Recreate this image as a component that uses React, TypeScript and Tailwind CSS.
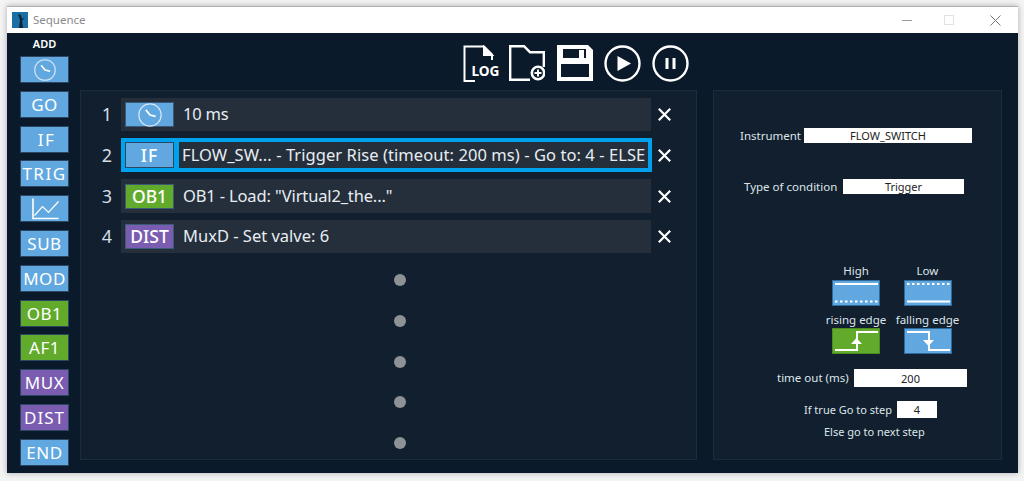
import React from "react";

const FONT = "font-['Noto_Sans','Open_Sans',sans-serif]";

function Clock({ size = 28 }: { size?: number }) {
  return (
    <svg width={size} height={size} viewBox="0 0 28 28" fill="none">
      <circle cx="14" cy="14" r="12" stroke="#d5e6f5" strokeWidth="1.3" />
      <path d="M9.5 8.5 L14 14 L20 15.5" stroke="#ffffff" strokeWidth="1.8" />
    </svg>
  );
}

function Chart() {
  return (
    <svg width="30" height="24" viewBox="0 0 30 24" fill="none" stroke="#fff">
      <path d="M3 1.5 V21.5 H28.5" strokeWidth="1.6" />
      <path d="M4.5 18.5 L12.5 9.5 L18.5 15.5 L28.5 4.5" strokeWidth="1.2" />
    </svg>
  );
}

const blue = "bg-[#62a8e0]";
const green = "bg-[#62aa2c]";
const purple = "bg-[#7a5cb0]";

function SideBtn({ color, extra = "tracking-[0.5px]", children }: { color: string; extra?: string; children: React.ReactNode }) {
  return (
    <div className={`${color} ${extra} w-[49px] h-[27px] border border-[#2c4560] flex items-center justify-center text-white text-[17px] leading-none`}>
      {children}
    </div>
  );
}

function Num({ n }: { n: number }) {
  return <div className="w-[40px] pr-[9px] text-right text-[18px] text-[#d5dde5]">{n}</div>;
}

function Row({ n, h, color, tag, text, extra = "" }: { n: number; h: string; color: string; tag: React.ReactNode; text: string; extra?: string }) {
  return (
    <div className={`flex items-center ${h}`}>
      <Num n={n} />
      <div className={`w-[530px] ${h} bg-[#252f3b] flex items-center pl-[4px]`}>
        <div className={`${color} w-[49px] h-[25px] flex items-center justify-center text-white text-[17.5px] font-medium border border-[#3a5a78] shrink-0`}>{tag}</div>
        <div className={`ml-[9px] text-[#e8edf2] text-[16.5px] whitespace-nowrap ${extra}`}>{text}</div>
      </div>
      <X />
    </div>
  );
}

function X() {
  return (
    <svg className="ml-[7px]" width="13" height="13" viewBox="0 0 13 13" stroke="#fff" strokeWidth="2.2">
      <path d="M0.8 0.8 L12.2 12.2 M12.2 0.8 L0.8 12.2" />
    </svg>
  );
}

function Field({ w, children }: { w: string; children: React.ReactNode }) {
  return <div className={`${w} bg-white text-[#222] text-[11px] leading-none flex items-center justify-center`}>{children}</div>;
}

function Dot() {
  return <div className="w-[12px] h-[12px] rounded-full bg-[#8d9296] blur-[0.6px]" />;
}

function EdgeBox({ color, border, children }: { color: string; border: string; children: React.ReactNode }) {
  return (
    <div className={`${color} w-[48px] h-[26px] border ${border}`}>
      <svg width="46" height="24" viewBox="0 0 46 24" fill="none" stroke="#fff">{children}</svg>
    </div>
  );
}

export default function App() {
  return (
    <div className={`w-[1024px] h-[481px] bg-[#f4f4f4] pt-[6px] pl-[7px] ${FONT} overflow-hidden`}>
      <div className="w-[1011px] h-[467px] flex flex-col shadow-[0_0_6px_rgba(0,0,0,0.3)] border-t border-[#b0b0b0]">
        {/* Title bar */}
        <div className="h-[26px] bg-white flex items-center pl-[5px] shrink-0">
          <svg width="16" height="16" viewBox="0 0 16 16">
            <rect width="16" height="16" fill="#1a6fa5" />
            <path d="M7 16 L8 8 L6 2 L9 3 L10 7 L13 5 L10 9 L11 16 Z" fill="#10222f" />
          </svg>
          <span className="ml-[5px] text-[11.5px] text-[#8a8a8a]">Sequence</span>
          <div className="flex-1" />
          <div className="w-[10px] h-px bg-[#9a9a9a] mr-[32px]" />
          <div className="w-[10px] h-[10px] border border-[#e2e2e2] mr-[36px]" />
          <svg className="mr-[17px]" width="11" height="11" viewBox="0 0 11 11" stroke="#777" strokeWidth="1">
            <path d="M0.5 0.5 L10.5 10.5 M10.5 0.5 L0.5 10.5" />
          </svg>
        </div>
        {/* Body */}
        <div className="flex-1 bg-[#0b1a2a] flex min-h-0">
          {/* Sidebar */}
          <div className="w-[73px] pl-[13px] shrink-0 flex flex-col">
            <div className="w-[49px] text-center text-white text-[11px] font-semibold leading-none mt-[5px] mb-[7px] h-[11px]">ADD</div>
            <div className="flex flex-col gap-[7.8px]">
              <SideBtn color={blue}><Clock size={24} /></SideBtn>
              <SideBtn color={blue}>GO</SideBtn>
              <SideBtn color={blue} extra="pl-[4px] tracking-[1.5px]">IF</SideBtn>
              <SideBtn color={blue} extra="tracking-[1.5px]">TRIG</SideBtn>
              <SideBtn color={blue}><Chart /></SideBtn>
              <SideBtn color={blue}>SUB</SideBtn>
              <SideBtn color={blue}>MOD</SideBtn>
              <SideBtn color={green}>OB1</SideBtn>
              <SideBtn color={green}>AF1</SideBtn>
              <SideBtn color={purple}>MUX</SideBtn>
              <SideBtn color={purple} extra="tracking-[1px]">DIST</SideBtn>
              <SideBtn color={blue}>END</SideBtn>
            </div>
          </div>
          {/* Main */}
          <div className="flex-1 flex flex-col min-w-0">
            <div className="h-[57px] shrink-0 flex items-start pl-[383px] pt-[12px]">
              <svg width="37" height="37" viewBox="0 0 37 37" fill="none" stroke="#fff" strokeWidth="2">
                <path d="M12 36 H1.5 V1.5 H21 L29 9.5 V15" />
                <path d="M21 2 V10 H29 Z" fill="#fff" />
                <text x="8.5" y="31" fill="#fff" stroke="none" fontSize="14" fontWeight="700" fontFamily="Noto Sans" textLength="28" lengthAdjust="spacingAndGlyphs">LOG</text>
              </svg>
              <svg className="ml-[9px]" width="36" height="36" viewBox="0 0 36 36" fill="none" stroke="#fff" strokeWidth="2.4">
                <path d="M21 34.8 H1.2 V1.2 H15 L21 7.2 H34.8 V22" />
                <circle cx="29" cy="28" r="6.2" strokeWidth="2.6" />
                <path d="M25.5 28 H32.5 M29 24.5 V31.5" strokeWidth="2" />
              </svg>
              <svg className="ml-[12px]" width="36" height="36" viewBox="0 0 36 36">
                <path d="M0 0 H31 L36 5 V36 H0 Z" fill="#fff" />
                <rect x="6" y="4" width="23" height="9" fill="#0b1a2a" />
                <rect x="22" y="5" width="5" height="8" fill="#fff" />
                <rect x="4" y="19" width="28" height="13" fill="#0b1a2a" />
              </svg>
              <svg className="ml-[11px]" width="37" height="37" viewBox="0 0 37 37" fill="none" stroke="#fff" strokeWidth="2.4">
                <circle cx="18.5" cy="18.5" r="17" />
                <path d="M13.5 11 L27 18.5 L13.5 26 Z" fill="#fff" stroke="none" />
              </svg>
              <svg className="ml-[11px]" width="37" height="37" viewBox="0 0 37 37" fill="none" stroke="#fff" strokeWidth="2.4">
                <circle cx="18.5" cy="18.5" r="17" />
                <path d="M15 13 V24 M22 13 V24" strokeWidth="3" />
              </svg>
            </div>
            <div className="flex gap-[16px] h-[370px]">
              {/* List panel */}
              <div className="w-[617px] bg-[#111f2e] border border-[#1b2c3d] shrink-0 pt-[7px] flex flex-col">
                <div className="flex flex-col gap-[7px]">
                  <Row n={1} h="h-[33px]" color={blue} tag={<Clock size={26} />} text="10 ms" extra="tracking-[-0.2px]" />
                  <div className="flex items-center h-[34px]">
                    <Num n={2} />
                    <div className="w-[531px] h-[34px] bg-[#00a2ed] p-[4px] flex gap-[5px]">
                      <div className={`${blue} w-[49px] flex items-center justify-center text-white text-[17.5px] font-medium border border-[#2c4560] shrink-0 tracking-[1px]`}>IF</div>
                      <div className="flex-1 pl-[3px] flex items-center bg-[#252f3b] text-[#e8edf2] text-[16.5px] tracking-[0.07px] whitespace-nowrap overflow-hidden">FLOW_SW... - Trigger Rise (timeout: 200 ms) - Go to: 4 - ELSE</div>
                    </div>
                    <svg className="ml-[6px]" width="13" height="13" viewBox="0 0 13 13" stroke="#fff" strokeWidth="2.2">
                      <path d="M0.8 0.8 L12.2 12.2 M12.2 0.8 L0.8 12.2" />
                    </svg>
                  </div>
                  <Row n={3} h="h-[34px]" color={green} tag="OB1" text={'OB1 - Load: "Virtual2_the..."'} extra="tracking-[-0.15px]" />
                  <Row n={4} h="h-[33px]" color={purple} tag="DIST" text="MuxD - Set valve: 6" />
                </div>
                <div className="flex flex-col items-center gap-[28.75px] pl-[23px] mt-[21px]">
                  <Dot /><Dot /><Dot /><Dot /><Dot />
                </div>
              </div>
              {/* Settings panel */}
              <div className="w-[289px] bg-[#111f2e] border border-[#1b2c3d] shrink-0 flex flex-col text-[#dfe5eb] text-[11.5px] leading-none">
                <div className="flex items-center h-[15px] mt-[37px] pl-[26px]">
                  <span className="w-[64px]">Instrument</span>
                  <Field w="w-[168px] h-[15px]">FLOW_SWITCH</Field>
                </div>
                <div className="flex items-center h-[15px] mt-[36px] pl-[30px]">
                  <span className="w-[99px] whitespace-nowrap">Type of condition</span>
                  <Field w="w-[121px] h-[15px]">Trigger</Field>
                </div>
                <div className="flex pl-[118px] gap-[24px] mt-[71px] text-center">
                  <div className="w-[48px] flex flex-col gap-[4px]">
                    <span className="h-[11px]">High</span>
                    <EdgeBox color={blue} border="border-[#2f6a9e]">
                      <path d="M2 3 H45" strokeWidth="2" />
                      <path d="M2 20.5 H45" strokeWidth="2" strokeDasharray="2.5 2.5" />
                    </EdgeBox>
                  </div>
                  <div className="w-[47px] flex flex-col gap-[4px]">
                    <span className="h-[11px]">Low</span>
                    <EdgeBox color={blue} border="border-[#2f6a9e]">
                      <path d="M2 3 H45" strokeWidth="2" strokeDasharray="2.5 2.5" />
                      <path d="M2 20.5 H45" strokeWidth="2" />
                    </EdgeBox>
                  </div>
                </div>
                <div className="flex pl-[118px] gap-[24px] mt-[8px] text-center">
                  <div className="w-[48px] flex flex-col items-center gap-[3px]">
                    <span className="h-[11px] whitespace-nowrap">rising edge</span>
                    <EdgeBox color={green} border="border-[#4d8a20]">
                      <path d="M2 21 H24 V3 H45" strokeWidth="2" />
                      <path d="M18 15 H29 L23.5 9 Z" fill="#fff" stroke="none" />
                    </EdgeBox>
                  </div>
                  <div className="w-[47px] flex flex-col items-center gap-[3px]">
                    <span className="h-[11px] whitespace-nowrap">falling edge</span>
                    <EdgeBox color={blue} border="border-[#2f6a9e]">
                      <path d="M2 3 H24 V21 H45" strokeWidth="2" />
                      <path d="M18 11 H29 L23.5 17 Z" fill="#fff" stroke="none" />
                    </EdgeBox>
                  </div>
                </div>
                <div className="flex items-center h-[18px] mt-[15px] pl-[63px]">
                  <span className="w-[77px] whitespace-nowrap">time out (ms)</span>
                  <Field w="w-[113px] h-[18px]">200</Field>
                </div>
                <div className="flex items-center h-[17px] mt-[14px] pl-[90px]">
                  <span className="w-[93px] text-[11px] whitespace-nowrap">If true Go to step</span>
                  <Field w="w-[40px] h-[17px]">4</Field>
                </div>
                <div className="pl-[110px] mt-[8px] text-[11px]">Else go to next step</div>
              </div>
            </div>
          </div>
        </div>
      </div>
    </div>
  );
}
